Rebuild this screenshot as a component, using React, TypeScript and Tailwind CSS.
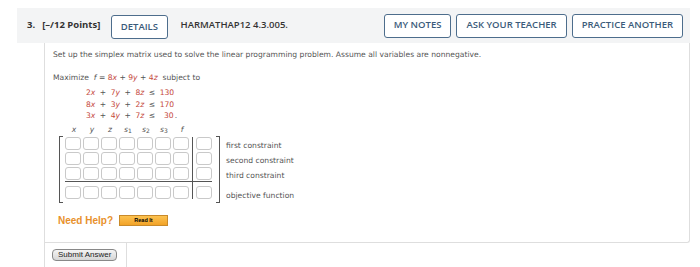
import React from 'react'

const red = 'text-[#c4463a]'

function Term({ c, v }: { c: string; v: string }) {
  return (
    <span>
      <span className={red}>{c}</span>
      <i className={red}>{v}</i>
    </span>
  )
}

const constraints = [
  ['2', '7', '8', '130'],
  ['8', '3', '2', '170'],
  ['3', '4', '7', '30'],
]

const colLabels: React.ReactNode[] = [
  <i key="x">x</i>,
  <i key="y">y</i>,
  <i key="z">z</i>,
  <span key="s1"><i>s</i><sub className="text-[6px]">1</sub></span>,
  <span key="s2"><i>s</i><sub className="text-[6px]">2</sub></span>,
  <span key="s3"><i>s</i><sub className="text-[6px]">3</sub></span>,
  <i key="f">f</i>,
]

function Box() {
  return <div className="h-[13px] w-[16px] rounded-[3px] border border-[#c9c9c9] bg-white" />
}

function BoxRow() {
  return (
    <div className="flex gap-[2px]">
      {Array.from({ length: 7 }).map((_, i) => (
        <Box key={i} />
      ))}
    </div>
  )
}

function HeaderButton({ label, wide }: { label: string; wide?: boolean }) {
  return (
    <button
      className={`h-[24px] rounded-[3px] border border-[#4d6d8c] bg-white text-[9.5px] font-semibold text-[#3b5b7a] ${
        wide ? 'px-[8.5px]' : 'px-[9px]'
      }`}
    >
      {label}
    </button>
  )
}

export default function App() {
  return (
    <div className="h-[267px] w-[700px] overflow-hidden bg-white pl-[17px] pt-[8px]">
      <div className="w-[673px]">
        {/* question header */}
        <div className="flex h-[35px] items-center justify-between bg-[#f3f4f5] pl-[10px] pr-[7px] font-['Open_Sans',sans-serif] text-[#333]">
          <div className="flex items-center">
            <span className="text-[9.5px] font-bold">3.</span>
            <span className="ml-[7px] text-[9.5px] font-bold">[–/12 Points]</span>
            <span className="ml-[11px]">
              <HeaderButton label="DETAILS" wide />
            </span>
            <span className="ml-[13px] text-[9.5px] font-semibold">HARMATHAP12 4.3.005.</span>
          </div>
          <div className="flex gap-[5px]">
            <HeaderButton label="MY NOTES" />
            <HeaderButton label="ASK YOUR TEACHER" />
            <HeaderButton label="PRACTICE ANOTHER" />
          </div>
        </div>

        {/* question body */}
        <div className="ml-[27px] h-[200px] rounded-br-[3px] border-b border-l border-r border-[#dedede] pl-[8px] pt-[6px] font-['DejaVu_Sans',Verdana,sans-serif] text-[7.6px] leading-[11px] text-[#555]">
          <div>
            Set up the simplex matrix used to solve the linear programming problem. Assume all variables are
            nonnegative.
          </div>
          <div className="mt-[12px]">
            Maximize&nbsp; <i>f</i> = <Term c="8" v="x" /> + <Term c="9" v="y" /> + <Term c="4" v="z" />&nbsp; subject
            to
          </div>
          <div className="ml-[33px] mt-[4px] leading-[11.5px]">
            {constraints.map((r, i) => (
              <div key={i} className="flex gap-[4.5px]">
                <Term c={r[0]} v="x" />
                <span>+</span>
                <Term c={r[1]} v="y" />
                <span>+</span>
                <Term c={r[2]} v="z" />
                <span>≤</span>
                <span className="flex">
                  <span className={`w-[14px] text-right ${red}`}>{r[3]}</span>
                  {i === 2 ? <span className="ml-[1px]">.</span> : null}
                </span>
              </div>
            ))}
          </div>

          {/* matrix */}
          <div className="ml-[6px] mt-[3px]">
            <div className="flex h-[10px] pl-[6px] leading-[10px]">
              {colLabels.map((l, i) => (
                <div key={i} className="w-[18px] text-center">
                  {l}
                </div>
              ))}
            </div>
            <div className="mt-[1px] flex items-stretch">
              <div className="h-[67px] w-[4px] border-b border-l border-t border-[#555]" />
              <div className="flex flex-col pl-[2px] pt-[1px]">
                <div className="flex">
                  <div className="flex flex-col gap-[2px] pb-[1px]">
                    <BoxRow />
                    <BoxRow />
                    <BoxRow />
                  </div>
                  <div className="mx-[3px] w-px bg-[#555]" />
                  <div className="flex flex-col gap-[2px]">
                    <Box />
                    <Box />
                    <Box />
                  </div>
                </div>
                <div className="h-px bg-[#555]" />
                <div className="flex">
                  <div className="pt-[4px]">
                    <BoxRow />
                  </div>
                  <div className="mx-[3px] w-px bg-[#555]" />
                  <div className="pt-[4px]">
                    <Box />
                  </div>
                </div>
              </div>
              <div className="ml-[4px] h-[67px] w-[4px] border-b border-r border-t border-[#555]" />
              <div className="ml-[6px] flex flex-col pt-[2px] leading-[15px]">
                <div>first constraint</div>
                <div>second constraint</div>
                <div>third constraint</div>
                <div className="mt-[5px]">objective function</div>
              </div>
            </div>
          </div>

          {/* help */}
          <div className="ml-[5px] mt-[11px] flex items-center font-['Liberation_Sans',Arial,sans-serif]">
            <span className="text-[10px] font-bold leading-[13px] text-[#e8912c]">Need Help?</span>
            <button className="ml-[6px] h-[11px] w-[49px] border border-[#c98a2a] bg-gradient-to-b from-[#fcc24f] to-[#f2a326] text-[5.5px] font-bold leading-[9px] text-black">
              Read It
            </button>
          </div>
        </div>

        {/* footer */}
        <div className="ml-[27px] flex h-[30px] items-start">
          <div className="flex h-full w-[83px] items-start border-l border-r border-[#dedede] pl-[7px] pt-[6px]">
            <button className="block h-[12px] rounded-[4px] border border-[#888] bg-gradient-to-b from-[#f4f4f4] to-[#d6d6d6] px-[5px] font-['Liberation_Sans',Arial,sans-serif] text-[8px] leading-[10px] text-[#222]">
              Submit Answer
            </button>
          </div>
        </div>
      </div>
    </div>
  )
}
